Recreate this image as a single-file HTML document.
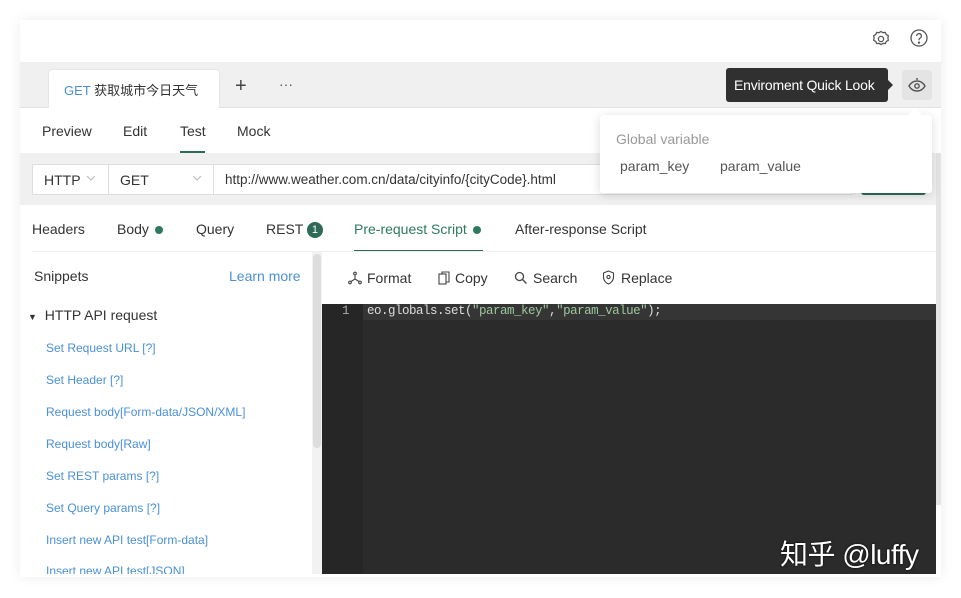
<!DOCTYPE html>
<html><head><meta charset="utf-8"><style>
*{margin:0;padding:0;box-sizing:border-box}
body{width:961px;height:598px;background:#fff;font-family:"Liberation Sans","Noto Sans CJK SC",sans-serif;position:relative;overflow:hidden;color:#333}
.a{position:absolute}
.card{left:20px;top:20px;width:921px;height:557px;background:#fff;box-shadow:0 0 12px rgba(0,0,0,.08);overflow:hidden}
.t{font-size:14px;white-space:nowrap}
.link{color:#4a90d9;font-size:12px}
</style></head><body>
<div class="a card"></div>
<svg class="a" style="left:871px;top:29px" width="20" height="20" viewBox="0 0 20 20" fill="none" stroke="#555" stroke-width="1.3"><path d="M10 2.5l2 1.2 2.3-.3 1 2.1 2 1.2-.4 2.3.4 2.3-2 1.2-1 2.1-2.3-.3-2 1.2-2-1.2-2.3.3-1-2.1-2-1.2.4-2.3-.4-2.3 2-1.2 1-2.1 2.3.3z"/><circle cx="10" cy="10" r="2.6"/></svg>
<svg class="a" style="left:909px;top:28px" width="20" height="20" viewBox="0 0 20 20" fill="none" stroke="#555" stroke-width="1.3"><circle cx="10" cy="10" r="8"/><path d="M7.6 8a2.4 2.4 0 1 1 3.3 2.2c-.6.3-.9.8-.9 1.5v.6"/><circle cx="10" cy="14.6" r=".5" fill="#555"/></svg>
<div class="a" style="left:20px;top:62px;width:921px;height:46px;background:#f0f0f0;border-bottom:1px solid #e2e2e2"></div>
<div class="a" style="left:48px;top:69px;width:172px;height:39px;background:#fff;border-radius:4px 4px 0 0;border:1px solid #e6e6e6;border-bottom:none"></div>
<div class="a t" style="left:64px;top:80px;font-size:13px"><span style="color:#4a90d9">GET</span> 获取城市今日天气</div>
<div class="a" style="left:235px;top:75px;font-size:20px;color:#444">+</div>
<div class="a" style="left:279px;top:76px;font-size:14px;color:#555">···</div>
<div class="a t" style="left:42px;top:123px">Preview</div>
<div class="a t" style="left:123px;top:123px">Edit</div>
<div class="a t" style="left:180px;top:123px">Test</div>
<div class="a" style="left:180px;top:151px;width:25px;height:2px;background:#2d6a57"></div>
<div class="a t" style="left:237px;top:123px">Mock</div>
<div class="a" style="left:20px;top:153px;width:916px;height:52px;background:#f0f0f0"></div>
<div class="a" style="left:32px;top:164px;width:820px;height:31px;background:#fff;border:1px solid #ddd"></div>
<div class="a" style="left:108px;top:164px;width:1px;height:31px;background:#ddd"></div>
<div class="a" style="left:213px;top:164px;width:1px;height:31px;background:#ddd"></div>
<div class="a t" style="left:44px;top:172px">HTTP</div>
<svg class="a" style="left:86px;top:175px" width="10" height="7" viewBox="0 0 10 7" fill="none" stroke="#bbb"><path d="M1 1l4 4 4-4"/></svg>
<div class="a t" style="left:120px;top:172px">GET</div>
<svg class="a" style="left:192px;top:175px" width="10" height="7" viewBox="0 0 10 7" fill="none" stroke="#bbb"><path d="M1 1l4 4 4-4"/></svg>
<div class="a t" style="left:225px;top:172px;font-size:13.5px">http://www.weather.com.cn/data/cityinfo/{cityCode}.html</div>
<div class="a" style="left:861px;top:164px;width:65px;height:31px;background:#2d6a57;border-radius:3px"></div>
<div class="a" style="left:936px;top:153px;width:5px;height:352px;background:#e4e4e4"></div>
<div class="a t" style="left:32px;top:221px">Headers</div>
<div class="a t" style="left:117px;top:221px">Body <span style="display:inline-block;width:8px;height:8px;border-radius:50%;background:#2d7a5f;margin-left:2px"></span></div>
<div class="a t" style="left:196px;top:221px">Query</div>
<div class="a t" style="left:266px;top:221px">REST <span style="display:inline-block;width:16px;height:16px;border-radius:50%;background:#2d6a57;color:#fff;font-size:11px;text-align:center;line-height:16px;vertical-align:1px">1</span></div>
<div class="a t" style="left:354px;top:221px;color:#2d7a5f">Pre-request Script <span style="display:inline-block;width:8px;height:8px;border-radius:50%;background:#2d7a5f;margin-left:2px"></span></div>
<div class="a" style="left:354px;top:250px;width:129px;height:2px;background:#2d6a57"></div>
<div class="a t" style="left:515px;top:221px">After-response Script</div>
<div class="a" style="left:32px;top:251px;width:904px;height:1px;background:#eee"></div>
<div class="a t" style="left:34px;top:268px">Snippets</div>
<div class="a t" style="left:229px;top:268px;color:#4a90d9">Learn more</div>
<div class="a t" style="left:28px;top:307px"><span style="font-size:9px">▼</span>&nbsp; HTTP API request</div>
<div class="a link" style="left:46px;top:341px">Set Request URL [?]</div>
<div class="a link" style="left:46px;top:373px">Set Header [?]</div>
<div class="a link" style="left:46px;top:405px">Request body[Form-data/JSON/XML]</div>
<div class="a link" style="left:46px;top:437px">Request body[Raw]</div>
<div class="a link" style="left:46px;top:469px">Set REST params [?]</div>
<div class="a link" style="left:46px;top:501px">Set Query params [?]</div>
<div class="a link" style="left:46px;top:533px">Insert new API test[Form-data]</div>
<div class="a link" style="left:46px;top:564px;height:10px;overflow:hidden">Insert new API test[JSON]</div>
<div class="a" style="left:312px;top:252px;width:10px;height:322px;background:#f2f2f2"></div>
<div class="a" style="left:313px;top:254px;width:8px;height:194px;background:#ddd;border-radius:4px"></div>
<svg class="a" style="left:348px;top:271px" width="14" height="14" viewBox="0 0 14 14" fill="none" stroke="#444" stroke-width="1.1"><circle cx="7" cy="2.5" r="1.3"/><circle cx="2" cy="11.5" r="1.3"/><circle cx="12" cy="11.5" r="1.3"/><path d="M7 4v4M7 8L3 10.5M7 8l4 2.5"/></svg>
<div class="a t" style="left:367px;top:270px">Format</div>
<svg class="a" style="left:438px;top:271px" width="12" height="14" viewBox="0 0 12 14" fill="none" stroke="#444" stroke-width="1.1"><rect x="1" y="3" width="7" height="10"/><path d="M4 3V1h7v10H8"/></svg>
<div class="a t" style="left:455px;top:270px">Copy</div>
<svg class="a" style="left:514px;top:271px" width="14" height="14" viewBox="0 0 14 14" fill="none" stroke="#444" stroke-width="1.3"><circle cx="5.5" cy="5.5" r="4"/><path d="M8.5 8.5l4 4"/></svg>
<div class="a t" style="left:533px;top:270px">Search</div>
<svg class="a" style="left:602px;top:270px" width="13" height="15" viewBox="0 0 13 15" fill="none" stroke="#444" stroke-width="1.1"><path d="M6.5 1l5 2v4c0 3.5-2.5 6-5 7-2.5-1-5-3.5-5-7V3z"/><circle cx="6.5" cy="7" r="1.6"/></svg>
<div class="a t" style="left:621px;top:270px">Replace</div>
<div class="a" style="left:322px;top:304px;width:614px;height:270px;background:#2b2b2b"></div>
<div class="a" style="left:322px;top:304px;width:41px;height:270px;background:#262626"></div>
<div class="a" style="left:363px;top:304px;width:573px;height:16px;background:#353535"></div>
<div class="a" style="left:342px;top:304px;font:12.5px 'Liberation Mono',monospace;color:#aaa">1</div>
<div class="a" style="left:367px;top:304px;font:12.5px 'Liberation Mono',monospace;color:#ddd;white-space:pre;letter-spacing:-0.5px">eo.globals.set(<span style="color:#9cc89c">"param_key"</span>,<span style="color:#9cc89c">"param_value"</span>);</div>
<div class="a" style="left:780px;top:533px;font-size:28px;color:#fff;white-space:nowrap;text-shadow:0 0 2px #000;letter-spacing:-0.5px">知乎 @luffy</div>
<div class="a" style="left:726px;top:68px;width:162px;height:34px;background:#303030;border-radius:3px;color:#fff;font-size:14px;line-height:34px;padding-left:8px;letter-spacing:-0.2px">Enviroment Quick Look</div>
<div class="a" style="left:887px;top:79px;width:0;height:0;border-top:6px solid transparent;border-bottom:6px solid transparent;border-left:6px solid #303030"></div>
<div class="a" style="left:902px;top:70px;width:30px;height:30px;background:#e4e4e4;border-radius:3px"></div>
<svg class="a" style="left:907px;top:76px" width="20" height="18" viewBox="0 0 20 18" fill="none" stroke="#555" stroke-width="1.4"><path d="M2 10c2-3.5 5-5 8-5s6 1.5 8 5c-2 3.5-5 5-8 5s-6-1.5-8-5z"/><circle cx="10" cy="10" r="2.2"/><path d="M10 2v2"/></svg>
<div class="a" style="left:600px;top:115px;width:332px;height:78px;background:#fff;border-radius:3px;box-shadow:0 2px 10px rgba(0,0,0,.15)"></div>
<div class="a" style="left:910px;top:110px;width:10px;height:10px;background:#fff;transform:rotate(45deg)"></div>
<div class="a t" style="left:616px;top:131px;color:#999">Global variable</div>
<div class="a t" style="left:620px;top:158px;color:#555">param_key</div>
<div class="a t" style="left:720px;top:158px;color:#555">param_value</div>
</body></html>
